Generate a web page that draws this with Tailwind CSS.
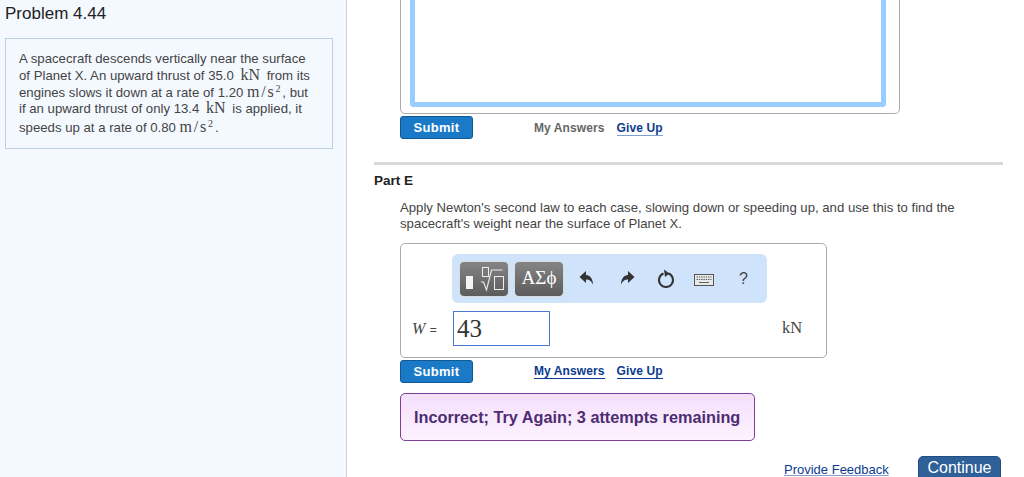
<!DOCTYPE html>
<html lang="en">
<head>
    <meta charset="UTF-8">
    <title>Problem 4.44</title>
    <script src="https://cdn.jsdelivr.net/npm/@tailwindcss/browser@4"></script>
</head>
<body class="bg-white font-['Liberation_Sans',Arial,sans-serif] text-[#333]">
    <div class="flex h-[477px] w-[1024px] overflow-hidden">
        <!-- Left problem column -->
        <aside class="w-[347px] shrink-0 border-r border-[#c3d3e3] bg-[#f4f9ff] pl-[5px] pr-[13px]">
            <h1 class="pt-[3px] text-[17px] leading-[21px] text-[#222]">Problem 4.44</h1>
            <div class="mt-[14px] h-[111px] border border-[#bdd0e0] pl-[13px] pt-[12px] text-[13.200px] leading-[16px] text-[#444]">
                <p class="h-[16px] whitespace-nowrap">A spacecraft descends vertically near the surface</p>
                <p class="h-[17px] whitespace-nowrap">of Planet X. An upward thrust of 35.0 <span class="mx-[3px] font-['Liberation_Serif',serif] text-[16px] leading-none">kN</span> from its</p>
                <p class="h-[16px] whitespace-nowrap">engines slows it down at a rate of 1.20 <span class="font-['Liberation_Serif',serif] text-[16px] leading-none tracking-[1.800px]">m/s<sup class="-top-[5px] text-[10px]">2</sup></span>, but</p>
                <p class="h-[19px] whitespace-nowrap">if an upward thrust of only 13.4 <span class="mx-[3px] font-['Liberation_Serif',serif] text-[16px] leading-none">kN</span> is applied, it</p>
                <p class="h-[16px] whitespace-nowrap">speeds up at a rate of 0.80 <span class="font-['Liberation_Serif',serif] text-[16px] leading-none tracking-[1.800px]">m/s<sup class="-top-[5px] text-[10px]">2</sup></span>.</p>
            </div>
        </aside>

        <!-- Right parts column -->
        <main class="w-[677px] pl-[27px]">
            <div class="ml-[26px]">
                <div class="-mt-[40px] h-[154px] w-[500px] rounded-b-[5px] border border-[#aaa] pl-[9px]">
                    <div class="h-[146px] w-[476px] rounded-b-[4px] border-x-[5px] border-b-[5px] border-[#99ccff]"></div>
                </div>
                <div class="mt-[1px] flex h-[24px] items-center">
                    <button class="h-[23px] w-[73px] rounded-[3px] border border-[#125a94] bg-[#1a7ac8] pt-[1px] text-[13px] font-bold tracking-[0.3px] text-white">Submit</button>
                    <span class="mt-[2px] ml-[61px] text-[12px] font-bold tracking-[0.1px] text-[#666]">My Answers</span>
                    <a class="mt-[2px] ml-[12px] border-b border-[#7f9fd0] text-[12px] leading-[14px] font-bold tracking-[0.1px] text-[#0b3b91]">Give Up</a>
                </div>
            </div>

            <div class="mt-[23px] h-[3px] w-[629px] bg-[#d8d8d8]"></div>
            <h2 class="mt-[8px] text-[13.500px] leading-[16px] font-bold text-[#222]">Part E</h2>

            <div class="ml-[26px]">
                <p class="mt-[11px] text-[13.160px] leading-[16px] text-[#444]">Apply Newton's second law to each case, slowing down or speeding up, and use this to find the<br>spacecraft's weight near the surface of Planet X.</p>

                <div class="mt-[11px] h-[115px] w-[427px] rounded-[5px] border border-[#aaa]">
                    <!-- Math toolbar -->
                    <div class="mt-[10px] ml-[51px] flex h-[49px] w-[315px] items-center rounded-[6px] bg-[#cfe4fb] pl-[7px]">
                        <div class="flex h-[36px] w-[50px] items-center rounded-[5px] border border-[#d8dce0] bg-gradient-to-b from-[#858585] to-[#5c5c5c]">
                            <svg width="48" height="34" viewBox="0 0 48 34" fill="none">
                                <rect x="6" y="14" width="7" height="13" fill="#f4f4f4"/>
                                <rect x="22.500" y="5.500" width="6" height="9" stroke="#eee"/>
                                <path d="M21 20h2.500l3 8 5-20h11" stroke="#eee" stroke-width="1.100"/>
                                <rect x="34.500" y="14.500" width="9" height="13" stroke="#eee"/>
                            </svg>
                        </div>
                        <div class="ml-[5px] flex h-[36px] w-[50px] items-center justify-center rounded-[5px] border border-[#d8dce0] bg-gradient-to-b from-[#858585] to-[#5c5c5c] font-['Liberation_Serif',serif] text-[19px] text-white">ΑΣϕ</div>
                        <svg class="-mt-[2px] ml-[15px]" width="16" height="16" viewBox="0 0 16 16"><path d="M7 1 0.500 7 7 13V9.500c3 0 5 1 7 5C14 9 11 5 7 5z" fill="#333"/></svg>
                        <svg class="-mt-[2px] ml-[24px]" width="16" height="16" viewBox="0 0 16 16"><path d="M9 1l6.500 6L9 13V9.500c-3 0-5 1-7 5C2 9 5 5 9 5z" fill="#333"/></svg>
                        <svg class="ml-[22px]" width="18" height="20" viewBox="0 0 18 20" fill="none"><path d="M11.500 4.500a7 7 0 1 1-5 0" stroke="#333" stroke-width="2"/><path d="M7 0.500 12.500 4.500 8 8z" fill="#333"/></svg>
                        <svg class="mt-[3px] ml-[19px]" width="20" height="12" viewBox="0 0 20 12"><rect x="0.500" y="0.500" width="19" height="11" fill="#e8e8e8" stroke="#555"/><path d="M2.500 3h15M2.500 5.500h15" stroke="#666" stroke-dasharray="1.500 0.800"/><path d="M5 8.500h10" stroke="#666"/></svg>
                        <span class="ml-[25px] text-[16px] text-[#444]">?</span>
                    </div>

                    <div class="mt-[8px] flex h-[35px] items-center pl-[11px]">
                        <span class="w-[41px] text-[12px] text-[#444]"><i class="mr-[1px] font-['Liberation_Serif',serif] text-[16px]">W</i> =</span>
                        <div class="flex h-[35px] w-[97px] items-center border border-[#4a7bd0] pl-[3px] font-['Liberation_Serif',serif] text-[25px] text-[#333]">43</div>
                        <span class="ml-[232px] font-['Liberation_Serif',serif] text-[16.500px] text-[#444]">kN</span>
                    </div>
                </div>

                <div class="mt-[2px] flex h-[23px] items-center">
                    <button class="h-[23px] w-[73px] rounded-[3px] border border-[#125a94] bg-[#1a7ac8] text-[13px] font-bold tracking-[0.3px] text-white">Submit</button>
                    <a class="ml-[61px] border-b border-[#0b3b91] text-[12px] leading-[14px] font-bold tracking-[0.1px] text-[#0b3b91]">My Answers</a>
                    <a class="ml-[12px] border-b border-[#0b3b91] text-[12px] leading-[14px] font-bold tracking-[0.1px] text-[#0b3b91]">Give Up</a>
                </div>

                <div class="mt-[10px] flex h-[48px] w-[355px] items-center rounded-[5px] border border-[#7d3f98] bg-gradient-to-b from-[#f4dffb] to-[#fdf2ff] pl-[13px] text-[16.250px] font-bold text-[#4d2c72]">Incorrect; Try Again; 3 attempts remaining</div>
            </div>

            <div class="mt-[15px] flex items-start pl-[410px]">
                <a class="mt-[6px] w-[105px] whitespace-nowrap text-[13px] leading-[16px] text-[#0b3b91] underline decoration-[#7f9fd0]">Provide Feedback</a>
                <div class="ml-[29px] flex h-[30px] w-[83px] items-start justify-center rounded-[5px] border border-[#1d4f85] bg-[#2f6097] text-[16px] leading-[22px] text-white">Continue</div>
            </div>
        </main>
    </div>
</body>
</html>
